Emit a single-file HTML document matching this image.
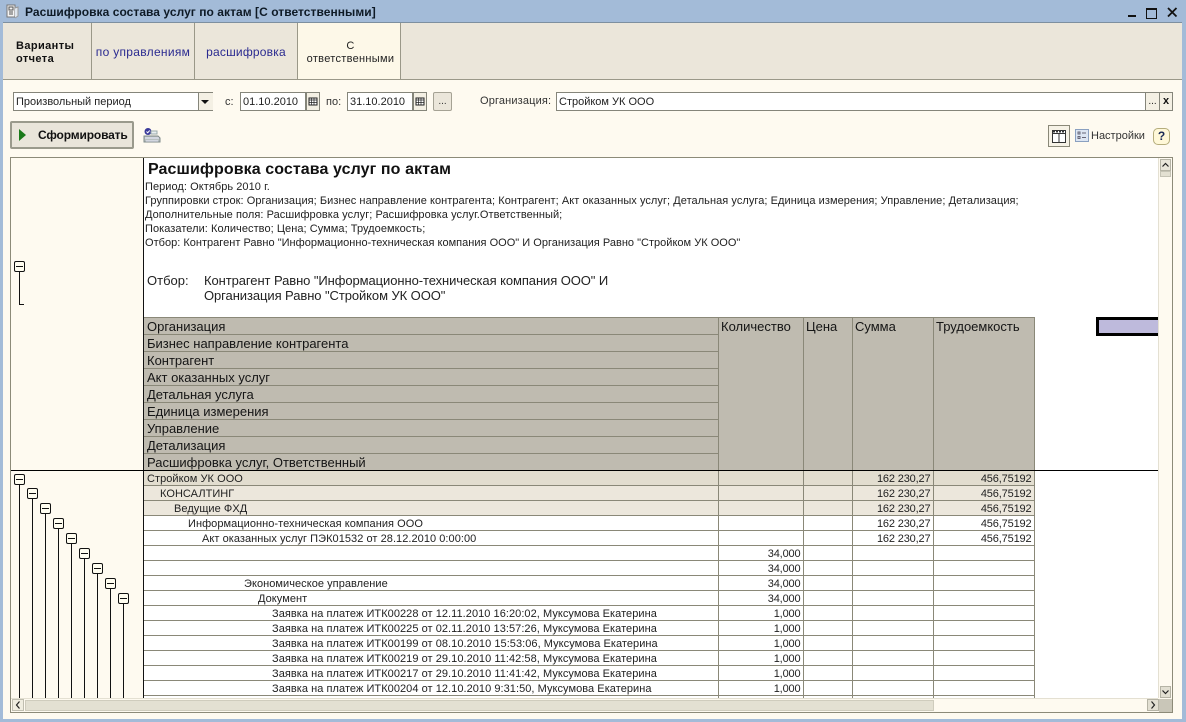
<!DOCTYPE html>
<html lang="ru"><head><meta charset="utf-8"><title>Расшифровка состава услуг по актам</title>
<style>
html,body{margin:0;padding:0}
body{width:1186px;height:722px;overflow:hidden;position:relative;background:#fefaf0;font-family:"Liberation Sans",Arial,sans-serif;color:#111}
.a,.t{position:absolute}
.t{white-space:nowrap;line-height:14px}
.sm{font-size:11px;letter-spacing:.055px;color:#222}
.in{position:absolute;background:#fff;border:1px solid #85857a;box-sizing:border-box;font-size:11px;line-height:18px;padding-left:2px;color:#222;white-space:nowrap}
.tab{position:absolute;top:23px;height:56px;box-sizing:border-box;border-right:1px solid #9a9888;background:#ebe6da;font-size:12px;letter-spacing:.3px;color:#2a2a90;text-align:center;display:flex;align-items:center;justify-content:center;line-height:13px}
.box{position:absolute;width:9px;height:9px;border:1px solid #111;background:#fffdf0;border-radius:2px}
.box:after{content:"";position:absolute;left:1px;right:1px;top:4px;height:1px;background:#111}
.v{position:absolute;width:1px;background:#111}
.hr{position:absolute;left:144px;width:574px;height:17px;box-sizing:border-box;border-top:1px solid #8a8878;font-size:13px;line-height:16px;padding-left:3px;padding-top:1px;background:#bfbbb0;color:#151515;white-space:nowrap;overflow:hidden}
.hc{position:absolute;top:317px;height:154px;box-sizing:border-box;border:1px solid #8a8878;border-right:0;background:#bfbbb0;font-size:13px;line-height:16px;padding-left:2px;padding-top:1px;color:#151515}
table{position:absolute;left:144px;top:470px;border-collapse:collapse;table-layout:fixed;width:890px;font-size:11px;letter-spacing:.05px;color:#222}
td{height:15px;padding:2px 2px 0 2px;border:1px solid #8a8878;line-height:12px;white-space:nowrap;overflow:visible;box-sizing:border-box}
td:first-child{border-left:0;text-indent:1px}
td.n{text-align:right;letter-spacing:-.15px}
tr.g1 td{background:#e2ddcf}
tr.g2 td{background:#ece7dc}
tr{height:15px}
</style></head><body>

<!-- window frame -->
<div class="a" style="left:0;top:0;width:1186px;height:22px;background:#a3bbd8;border-bottom:1px solid #7d8f9f"></div>
<div class="a" style="left:0;top:0;width:3px;height:722px;background:#a3bbd8"></div>
<div class="a" style="left:1182px;top:0;width:4px;height:722px;background:#a3bbd8"></div>
<div class="a" style="left:0;top:719px;width:1186px;height:3px;background:#a3bbd8"></div>

<svg class="a" style="left:5px;top:4px" width="16" height="15" viewBox="0 0 16 15"><path d="M2 1h8v12H2z" fill="#f4f4f4" stroke="#777"/><path d="M4 3h4v3H4zM4 8h4M4 10h4" fill="none" stroke="#555"/><path d="M10 4l3-1v9l-3 2" fill="#dfe6ee" stroke="#999"/></svg>
<div class="t" style="left:25px;top:5px;font-size:12px;letter-spacing:.05px;font-weight:bold;color:#0e1a26;line-height:14px">Расшифровка состава услуг по актам [С ответственными]</div>
<div class="a" style="left:1128px;top:15px;width:8px;height:2px;background:#111"></div>
<div class="a" style="left:1146px;top:8px;width:9px;height:8px;border:1px solid #111;border-top-width:2px"></div>
<svg class="a" style="left:1167px;top:7px" width="11" height="11" viewBox="0 0 11 11"><path d="M1 1l8.500 8.500M9.500 1L1 9.500" stroke="#111" stroke-width="1.800"/></svg>

<!-- tabs -->
<div class="a" style="left:3px;top:23px;width:1179px;height:57px;background:#ebe6da;border-bottom:1px solid #9a9888;box-sizing:border-box"></div>
<div class="tab" style="left:3px;width:89px;color:#111;font-size:11px;letter-spacing:.4px;font-weight:bold;text-align:left;justify-content:flex-start;padding-left:13px;padding-top:3px">Варианты<br>отчета</div>
<div class="tab" style="left:92px;width:103px;padding-top:2px">по управлениям</div>
<div class="tab" style="left:195px;width:103px;padding-top:2px;letter-spacing:.2px">расшифровка</div>
<div class="tab" style="left:298px;width:103px;background:#fdf8e8;color:#222;font-size:11px;padding-top:3px;padding-left:3px">С<br>ответственными</div>

<!-- filter -->
<div class="in" style="left:13px;top:92px;width:200px;height:19px">Произвольный период</div>
<div class="a" style="left:198px;top:93px;width:14px;height:17px;background:#f4f0e4;border-left:1px solid #85857a"></div>
<div class="a" style="left:201px;top:100px;width:0;height:0;border:4px solid transparent;border-top:4px solid #111"></div>
<div class="t" style="left:225px;top:95px;font-size:11px;color:#333">с:</div>
<div class="in" style="left:240px;top:92px;width:66px;height:19px">01.10.2010</div>
<svg class="a" style="left:306px;top:92px" width="14" height="19" viewBox="0 0 14 19"><rect x="0.500" y="0.500" width="13" height="18" fill="#f4f0e4" stroke="#85857a"/><rect x="3" y="6" width="8" height="7" fill="#fff" stroke="#222"/><path d="M3 8h8M3 10.500h8M5.500 6v7M8 6v7" stroke="#222" stroke-width=".7"/></svg>
<div class="t" style="left:326px;top:95px;font-size:11px;color:#333">по:</div>
<div class="in" style="left:347px;top:92px;width:66px;height:19px">31.10.2010</div>
<svg class="a" style="left:413px;top:92px" width="14" height="19" viewBox="0 0 14 19"><rect x="0.500" y="0.500" width="13" height="18" fill="#f4f0e4" stroke="#85857a"/><rect x="3" y="6" width="8" height="7" fill="#fff" stroke="#222"/><path d="M3 8h8M3 10.500h8M5.500 6v7M8 6v7" stroke="#222" stroke-width=".7"/></svg>
<div class="a" style="left:433px;top:92px;width:19px;height:19px;box-sizing:border-box;border:1px solid #a5a294;border-radius:2px;background:#ebe6da;font-size:10px;text-align:center;line-height:17px;color:#333">...</div>
<div class="t" style="left:480px;top:94px;font-size:11px;letter-spacing:.15px;color:#333">Организация:</div>
<div class="in" style="left:556px;top:92px;width:590px;height:19px">Стройком УК ООО</div>
<div class="a" style="left:1146px;top:92px;width:14px;height:19px;box-sizing:border-box;border:1px solid #85857a;border-left:0;background:#f4f0e4;font-size:10px;line-height:18px;text-align:center;color:#222">...</div>
<div class="a" style="left:1160px;top:92px;width:13px;height:19px;box-sizing:border-box;border:1px solid #85857a;border-left:0;background:#f4f0e4;font-size:11px;font-weight:bold;line-height:16px;text-align:center;color:#111">x</div>

<!-- action row -->
<div class="a" style="left:10px;top:121px;width:124px;height:28px;box-sizing:border-box;border:2px solid #9a9a8c;border-radius:2px;background:#e9e5da"></div>
<div class="a" style="left:19px;top:129px;width:0;height:0;border-left:7px solid #1a7a1a;border-top:6px solid transparent;border-bottom:6px solid transparent"></div>
<div class="t" style="left:38px;top:128px;font-size:12px;letter-spacing:-.15px;font-weight:bold;color:#111">Сформировать</div>
<svg class="a" style="left:143px;top:127px" width="18" height="18" viewBox="0 0 18 18"><circle cx="5" cy="4.500" r="3.500" fill="#3a3a9a"/><path d="M3.500 4.500l1.200 1.300 2-2.300" stroke="#fff" fill="none"/><path d="M8 4h6v3H8z" fill="#e8eef0" stroke="#9aa"/><path d="M1 9h14l2 2v4H1z" fill="#b8c0c0" stroke="#7f8a8a"/><path d="M2 11h14M3 14h12" stroke="#eef" stroke-width="1"/></svg>

<div class="a" style="left:1048px;top:125px;width:22px;height:22px;box-sizing:border-box;border:1px solid #8a8878;background:#f6f2e6"></div>
<svg class="a" style="left:1051px;top:129px" width="16" height="15" viewBox="0 0 16 15"><rect x="1.500" y="1.500" width="13" height="12" fill="#fff" stroke="#333"/><path d="M1.500 4.500h13M8 4.500v9" stroke="#333"/><path d="M2 2.500h12" stroke="#333" stroke-dasharray="2 1" stroke-width="2"/></svg>
<svg class="a" style="left:1075px;top:129px" width="14" height="14" viewBox="0 0 14 14"><rect x="0.500" y="0.500" width="13" height="12" fill="#dde6f3" stroke="#8aa0c0"/><path d="M3 3h2v2H3zM3 7.500h2v2H3zM7 4h4M7 8.500h4" stroke="#667" fill="none"/></svg>
<div class="t" style="left:1091px;top:129px;font-size:11px;color:#333">Настройки</div>
<div class="a" style="left:1153px;top:128px;width:17px;height:17px;box-sizing:border-box;border:1px solid #b5ad7c;border-radius:5px;background:#fff8d8;font-size:12px;font-weight:bold;line-height:15px;text-align:center;color:#1a2a55">?</div>

<!-- report frame -->
<div class="a" style="left:10px;top:157px;width:1163px;height:556px;box-sizing:border-box;border:1px solid #8c8a78;background:#fefaf0"></div>
<div class="a" id="sheet" style="left:11px;top:158px;width:1147px;height:540px;overflow:hidden;background:#fff">
 <div style="position:absolute;left:-11px;top:-158px;width:1186px;height:722px">
  <div class="a" style="left:11px;top:157px;width:132px;height:560px;background:#fefaf0"></div>
  <div class="v" style="left:143px;top:157px;height:560px"></div>

  <div class="t" style="left:148px;top:161px;font-size:16px;letter-spacing:.09px;font-weight:bold;line-height:18px;color:#111">Расшифровка состава услуг по актам</div>
  <div class="t sm" style="left:145px;top:180px">Период: Октябрь 2010 г.</div>
  <div class="t sm" style="left:145px;top:194px">Группировки строк: Организация; Бизнес направление контрагента; Контрагент; Акт оказанных услуг; Детальная услуга; Единица измерения; Управление; Детализация;</div>
  <div class="t sm" style="left:145px;top:208px">Дополнительные поля: Расшифровка услуг; Расшифровка услуг.Ответственный;</div>
  <div class="t sm" style="left:145px;top:222px">Показатели: Количество; Цена; Сумма; Трудоемкость;</div>
  <div class="t sm" style="left:145px;top:236px;letter-spacing:.015px">Отбор: Контрагент Равно "Информационно-техническая компания ООО" И Организация Равно "Стройком УК ООО"</div>
  <div class="t" style="left:147px;top:274px;font-size:13px;color:#222">Отбор:</div>
  <div class="t" style="left:204px;top:274px;font-size:13px;letter-spacing:-.08px;color:#222">Контрагент Равно "Информационно-техническая компания ООО" И</div>
  <div class="t" style="left:204px;top:289px;font-size:13px;letter-spacing:-.08px;color:#222">Организация Равно "Стройком УК ООО"</div>

  <div class="hr" style="top:317px">Организация</div>
  <div class="hr" style="top:334px">Бизнес направление контрагента</div>
  <div class="hr" style="top:351px">Контрагент</div>
  <div class="hr" style="top:368px">Акт оказанных услуг</div>
  <div class="hr" style="top:385px">Детальная услуга</div>
  <div class="hr" style="top:402px">Единица измерения</div>
  <div class="hr" style="top:419px">Управление</div>
  <div class="hr" style="top:436px">Детализация</div>
  <div class="hr" style="top:453px;height:18px">Расшифровка услуг, Ответственный</div>
  <div class="hc" style="left:718px;width:85px">Количество</div>
  <div class="hc" style="left:803px;width:49px">Цена</div>
  <div class="hc" style="left:852px;width:81px">Сумма</div>
  <div class="hc" style="left:933px;width:102px;border-right:1px solid #8a8878">Трудоемкость</div>
  <div class="a" style="left:1096px;top:317px;width:70px;height:19px;box-sizing:border-box;border:3px solid #000;background:#bebadc"></div>

  <table>
   <colgroup><col style="width:574px"><col style="width:85px"><col style="width:49px"><col style="width:81px"><col style="width:101px"></colgroup>
   <tr class="g1"><td>Стройком УК ООО</td><td></td><td></td><td class="n">162 230,27</td><td class="n">456,75192</td></tr>
   <tr class="g2"><td style="padding-left:15px">КОНСАЛТИНГ</td><td></td><td></td><td class="n">162 230,27</td><td class="n">456,75192</td></tr>
   <tr class="g2"><td style="padding-left:29px">Ведущие ФХД</td><td></td><td></td><td class="n">162 230,27</td><td class="n">456,75192</td></tr>
   <tr><td style="padding-left:43px">Информационно-техническая компания ООО</td><td></td><td></td><td class="n">162 230,27</td><td class="n">456,75192</td></tr>
   <tr><td style="padding-left:57px">Акт оказанных услуг ПЭК01532 от 28.12.2010 0:00:00</td><td></td><td></td><td class="n">162 230,27</td><td class="n">456,75192</td></tr>
   <tr><td></td><td class="n">34,000</td><td></td><td></td><td></td></tr>
   <tr><td></td><td class="n">34,000</td><td></td><td></td><td></td></tr>
   <tr><td style="padding-left:99px">Экономическое управление</td><td class="n">34,000</td><td></td><td></td><td></td></tr>
   <tr><td style="padding-left:113px">Документ</td><td class="n">34,000</td><td></td><td></td><td></td></tr>
   <tr><td style="padding-left:127px">Заявка на платеж ИТК00228 от 12.11.2010 16:20:02, Муксумова Екатерина</td><td class="n">1,000</td><td></td><td></td><td></td></tr>
   <tr><td style="padding-left:127px">Заявка на платеж ИТК00225 от 02.11.2010 13:57:26, Муксумова Екатерина</td><td class="n">1,000</td><td></td><td></td><td></td></tr>
   <tr><td style="padding-left:127px">Заявка на платеж ИТК00199 от 08.10.2010 15:53:06, Муксумова Екатерина</td><td class="n">1,000</td><td></td><td></td><td></td></tr>
   <tr><td style="padding-left:127px">Заявка на платеж ИТК00219 от 29.10.2010 11:42:58, Муксумова Екатерина</td><td class="n">1,000</td><td></td><td></td><td></td></tr>
   <tr><td style="padding-left:127px">Заявка на платеж ИТК00217 от 29.10.2010 11:41:42, Муксумова Екатерина</td><td class="n">1,000</td><td></td><td></td><td></td></tr>
   <tr><td style="padding-left:127px">Заявка на платеж ИТК00204 от 12.10.2010 9:31:50, Муксумова Екатерина</td><td class="n">1,000</td><td></td><td></td><td></td></tr>
   <tr><td></td><td></td><td></td><td></td><td></td></tr>
  </table>

  <div class="a" style="left:11px;top:470px;width:1147px;height:1px;background:#000"></div>

  <!-- outline -->
  <div class="box" style="left:14px;top:261px"></div>
  <div class="v" style="left:19px;top:272px;height:33px"></div>
  <div class="a" style="left:19px;top:304px;width:5px;height:1px;background:#111"></div>

  <div class="v" style="left:19px;top:484px;height:230px"></div>
  <div class="v" style="left:32px;top:499px;height:215px"></div>
  <div class="v" style="left:45px;top:514px;height:200px"></div>
  <div class="v" style="left:58px;top:529px;height:185px"></div>
  <div class="v" style="left:71px;top:544px;height:170px"></div>
  <div class="v" style="left:84px;top:559px;height:155px"></div>
  <div class="v" style="left:97px;top:574px;height:140px"></div>
  <div class="v" style="left:110px;top:589px;height:125px"></div>
  <div class="v" style="left:123px;top:604px;height:110px"></div>
  <div class="box" style="left:14px;top:474px"></div>
  <div class="box" style="left:27px;top:488px"></div>
  <div class="box" style="left:40px;top:503px"></div>
  <div class="box" style="left:53px;top:518px"></div>
  <div class="box" style="left:66px;top:533px"></div>
  <div class="box" style="left:79px;top:548px"></div>
  <div class="box" style="left:92px;top:563px"></div>
  <div class="box" style="left:105px;top:578px"></div>
  <div class="box" style="left:118px;top:593px"></div>
 </div>
</div>

<!-- scrollbars -->
<div class="a" style="left:1158px;top:158px;width:1px;height:540px;background:#e4e0d2"></div>
<div class="a" style="left:11px;top:698px;width:1147px;height:1px;background:#e4e0d2"></div>
<svg class="a" style="left:1160px;top:159px" width="11" height="12" viewBox="0 0 11 12"><rect x="0.500" y="0.500" width="10" height="11" fill="#e9e6da" stroke="#b5b3a5"/><path d="M2.500 7.500l3-3 3 3" fill="none" stroke="#222" stroke-width="1.200"/></svg>
<div class="a" style="left:1160px;top:171px;width:11px;height:6px;box-sizing:border-box;border:1px solid #c5c3b5;background:#e3e0d2"></div>
<svg class="a" style="left:1160px;top:686px" width="11" height="12" viewBox="0 0 11 12"><rect x="0.500" y="0.500" width="10" height="11" fill="#e2dfd2" stroke="#b5b3a5"/><path d="M2.500 4.500l3 3 3-3" fill="none" stroke="#222" stroke-width="1.200"/></svg>
<svg class="a" style="left:12px;top:699px" width="12" height="12" viewBox="0 0 12 12"><rect x="0.500" y="0.500" width="11" height="11" fill="#f0ede0" stroke="#c0beb0"/><path d="M7.500 2.500l-3 3.500 3 3.500" fill="none" stroke="#222" stroke-width="1.200"/></svg>
<div class="a" style="left:25px;top:700px;width:909px;height:11px;box-sizing:border-box;border:1px solid #cfccbd;background:#e3e0d2"></div>
<svg class="a" style="left:1147px;top:699px" width="12" height="12" viewBox="0 0 12 12"><rect x="0.500" y="0.500" width="11" height="11" fill="#e2dfd2" stroke="#b5b3a5"/><path d="M4.500 2.500l3 3.500-3 3.500" fill="none" stroke="#222" stroke-width="1.200"/></svg>
<div class="a" style="left:1159px;top:699px;width:13px;height:13px;background:#c9c6b8"></div>

</body></html>
